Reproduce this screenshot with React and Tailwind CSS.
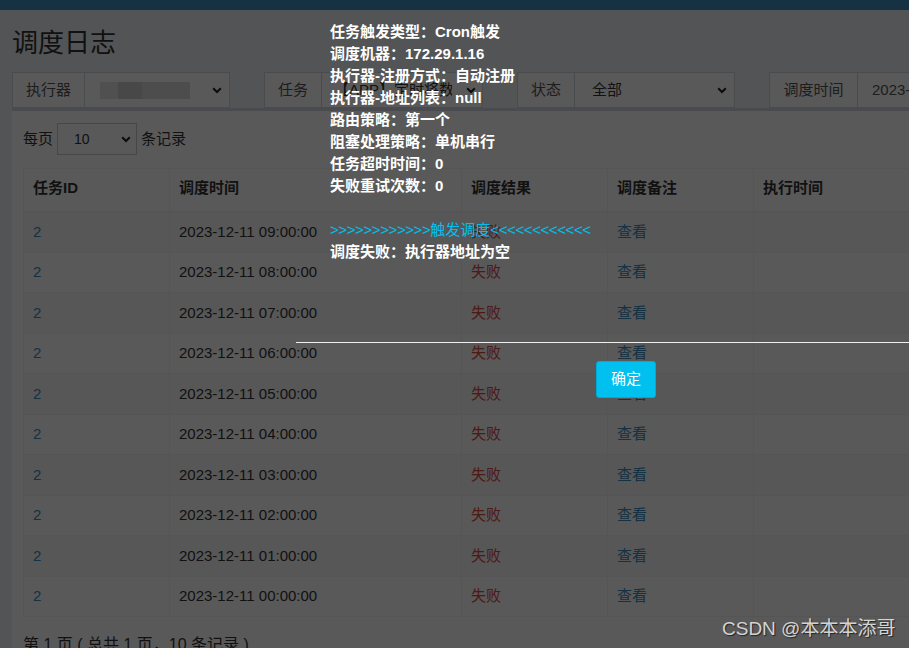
import React from 'react';

const hours = ['09', '08', '07', '06', '05', '04', '03', '02', '01', '00'];

const Chevron = () => (
  <svg width="10" height="7" viewBox="0 0 10 7" className="shrink-0">
    <path d="M1.2 1.2 L5 5 L8.8 1.2" fill="none" stroke="#222" strokeWidth="2" />
  </svg>
);

const App = () => {
  const font = { fontFamily: '"Liberation Sans", Arial, "Noto Sans CJK SC", sans-serif' };

  return (
    <div className="relative w-[909px] h-[648px] overflow-hidden bg-[#ecf0f5] text-[15px] text-[#333]" style={font}>
      {/* navbar (scrolled) */}
      <div className="h-[10px] bg-[#3c8dbc]" />

      <div className="pl-[12px]">
        {/* Header */}
        <h1 className="pt-[15px] text-[26px] leading-[36px] text-[#333]">调度日志</h1>

        {/* Filters */}
        <div className="mt-[11px] flex gap-[34px] h-[36px] w-[1100px]">
          <div className="flex w-[218px]">
            <div className="w-[73px] flex items-center justify-center bg-white border border-[#d2d6de] text-[#555]">执行器</div>
            <div className="flex-1 flex items-center justify-between bg-white border border-l-0 border-[#d2d6de] pl-[15px] pr-[7px]">
              <div className="flex items-center h-[17px]">
                <div className="w-[18px] h-[17px] bg-[#e4e4e4]" />
                <div className="w-[24px] h-[17px] bg-[#cfcfcf]" />
                <div className="w-[48px] h-[17px] bg-[#dcdcdc]" />
              </div>
              <Chevron />
            </div>
          </div>
          <div className="flex w-[219px]">
            <div className="w-[58px] flex items-center justify-center bg-white border border-[#d2d6de] text-[#555]">任务</div>
            <div className="flex-1 flex items-center justify-between bg-white border border-l-0 border-[#d2d6de] pl-[12px] pr-[6px] overflow-hidden">
              <span className="whitespace-nowrap overflow-hidden w-[118px]">【APP】定时将数据</span>
              <Chevron />
            </div>
          </div>
          <div className="flex w-[218px]">
            <div className="w-[58px] flex items-center justify-center bg-white border border-[#d2d6de] text-[#555]">状态</div>
            <div className="flex-1 flex items-center justify-between bg-white border border-l-0 border-[#d2d6de] pl-[17px] pr-[7px]">
              <span>全部</span>
              <Chevron />
            </div>
          </div>
          <div className="flex w-[260px]">
            <div className="w-[89px] flex items-center justify-center bg-white border border-[#d2d6de] text-[#555]">调度时间</div>
            <div className="flex-1 flex items-center bg-white border border-l-0 border-[#d2d6de] pl-[14px] text-[#555]">
              2023-12-11 00:00:00
            </div>
          </div>
        </div>

        {/* Box */}
        <div className="w-[1000px] bg-white border-t-[3px] border-[#d2d6de] pl-[11px] pt-[12px]">
          <div className="flex items-center h-[32px] gap-[4px]">
            <span>每页</span>
            <div className="w-[80px] h-[32px] border border-[#ccc] flex items-center justify-between pl-[16px] pr-[5px] text-[14px]">
              <span>10</span>
              <Chevron />
            </div>
            <span>条记录</span>
          </div>

          <table className="mt-[13px] table-fixed border-collapse w-[1000px]">
            <colgroup>
              <col className="w-[146px]" />
              <col className="w-[292px]" />
              <col className="w-[146px]" />
              <col className="w-[146px]" />
              <col className="w-[270px]" />
            </colgroup>
            <thead>
              <tr className="h-[43px] text-left font-bold">
                <th className="border border-[#f4f4f4] border-b-2 pl-[9px] pb-[3px]">任务ID</th>
                <th className="border border-[#f4f4f4] border-b-2 pl-[9px] pb-[3px]">调度时间</th>
                <th className="border border-[#f4f4f4] border-b-2 pl-[9px] pb-[3px]">调度结果</th>
                <th className="border border-[#f4f4f4] border-b-2 pl-[9px] pb-[3px]">调度备注</th>
                <th className="border border-[#f4f4f4] border-b-2 pl-[9px] pb-[3px]">执行时间</th>
              </tr>
            </thead>
            <tbody>
              {hours.map((h, i) => (
                <tr key={h} className={i % 2 === 0 ? 'h-[40.5px] bg-[#f9f9f9]' : 'h-[40.5px] bg-white'}>
                  <td className="border border-[#f4f4f4] pl-[9px] text-[#3c8dbc]">2</td>
                  <td className="border border-[#f4f4f4] pl-[9px]">2023-12-11 {h}:00:00</td>
                  <td className="border border-[#f4f4f4] pl-[9px] text-[#dd4b39]">失败</td>
                  <td className="border border-[#f4f4f4] pl-[9px] text-[#3c8dbc]">查看</td>
                  <td className="border border-[#f4f4f4] pl-[9px]"></td>
                </tr>
              ))}
            </tbody>
          </table>

          <div className="pt-[16px] text-[16px]">第 1 页 ( 总共 1 页，10 条记录 )</div>
        </div>
      </div>

      {/* backdrop */}
      <div className="absolute inset-0 bg-black/65" />

      {/* modal */}
      <div className="absolute left-[296px] top-0 right-0">
        <div className="h-[342px] pl-[34px] pt-[21px] text-white font-bold leading-[22px] text-[15px]">
          <div>任务触发类型：Cron触发</div>
          <div>调度机器：172.29.1.16</div>
          <div>执行器-注册方式：自动注册</div>
          <div>执行器-地址列表：null</div>
          <div>路由策略：第一个</div>
          <div>阻塞处理策略：单机串行</div>
          <div>任务超时时间：0</div>
          <div>失败重试次数：0</div>
          <div className="h-[22px]" />
          <div className="text-[#00c0ef] font-normal whitespace-nowrap">
            <span className="tracking-[-0.4px]">&gt;&gt;&gt;&gt;&gt;&gt;&gt;&gt;&gt;&gt;&gt;&gt;</span>触发调度<span className="tracking-[-0.4px]">&lt;&lt;&lt;&lt;&lt;&lt;&lt;&lt;&lt;&lt;&lt;&lt;</span>
          </div>
          <div>调度失败：执行器地址为空</div>
        </div>
        <div className="border-t border-[#f0f0f0] pt-[18px] pl-[300px]">
          <button className="w-[60px] h-[37px] rounded-[3px] bg-[#00c0ef] border border-[#00acd6] text-white text-[15px]">确定</button>
        </div>
      </div>

      {/* watermark */}
      <div
        className="absolute left-[722px] top-[615px] text-[19px] text-[#d4d4d4] whitespace-nowrap"
        style={{ textShadow: '1px 1px 1px rgba(0,0,0,0.6)' }}
      >
        CSDN @本本本添哥
      </div>
    </div>
  );
};

export default App;
